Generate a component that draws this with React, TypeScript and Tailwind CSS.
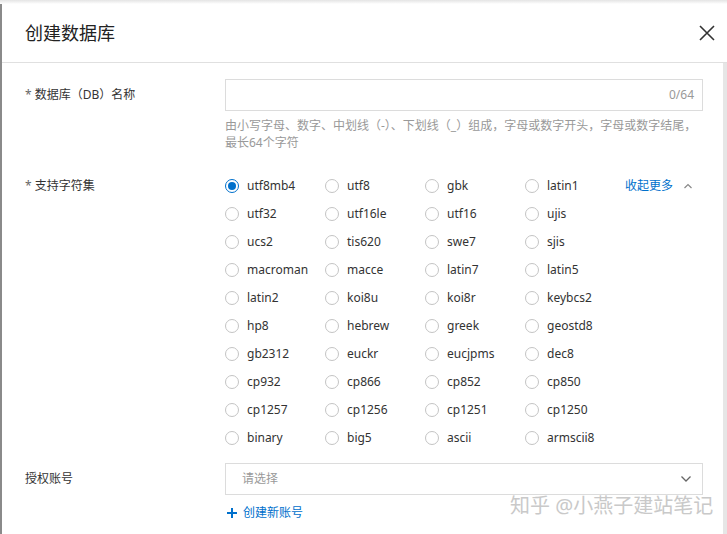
import React from "react";

const charsets = [
  "utf8mb4", "utf8", "gbk", "latin1",
  "utf32", "utf16le", "utf16", "ujis",
  "ucs2", "tis620", "swe7", "sjis",
  "macroman", "macce", "latin7", "latin5",
  "latin2", "koi8u", "koi8r", "keybcs2",
  "hp8", "hebrew", "greek", "geostd8",
  "gb2312", "euckr", "eucjpms", "dec8",
  "cp932", "cp866", "cp852", "cp850",
  "cp1257", "cp1256", "cp1251", "cp1250",
  "binary", "big5", "ascii", "armscii8",
];

function Radio({ checked }: { checked?: boolean }) {
  if (checked) {
    return (
      <span className="flex h-[14px] w-[14px] shrink-0 items-center justify-center rounded-full border border-[#0070cc] bg-white">
        <span className="h-[8px] w-[8px] rounded-full bg-[#0070cc]" />
      </span>
    );
  }
  return <span className="h-[14px] w-[14px] shrink-0 rounded-full border border-[#c4c4c4] bg-white" />;
}

export default function App() {
  return (
    <div
      className="relative h-[534px] w-[727px] overflow-hidden bg-white text-[#333]"
      style={{ fontFamily: '"Noto Sans", "Noto Sans CJK SC", sans-serif' }}
    >
      <div className="h-[4px] w-full bg-gradient-to-b from-[#e4e4e4] to-white" />
      <div className="flex h-[534px] border-l-2 border-[#8a8a8a]">
        <div className="flex flex-1 flex-col">
          {/* header */}
          <div className="flex h-[59px] items-center justify-between border-b border-[#e0e0e0] pl-[23px] pr-[10px]">
            <span className="text-[18px] leading-none text-[#222]">创建数据库</span>
            <svg width="18" height="18" viewBox="0 0 18 18" className="mr-[1px]">
              <path d="M2 2 L16 16 M16 2 L2 16" stroke="#333" strokeWidth="1.6" fill="none" />
            </svg>
          </div>
          <div className="flex flex-1">
            <div className="flex-1 pl-[23px] pr-[20px] pt-[16px]">
              {/* row 1 */}
              <div className="flex">
                <div className="flex h-[32px] w-[200px] shrink-0 items-center text-[12px]">
                  <span className="mr-[3px] text-[#666]">*</span>数据库（DB）名称
                </div>
                <div className="flex-1">
                  <div className="flex h-[32px] items-center justify-end border border-[#dcdcdc] pr-[8px] text-[12px] text-[#999]">
                    0/64
                  </div>
                  <div className="mt-[6px] text-[12px] leading-[17px] text-[#999]">
                    由小写字母、数字、中划线（-）、下划线（_）组成，字母或数字开头，字母或数字结尾，
                    <br />
                    最长64个字符
                  </div>
                </div>
              </div>
              {/* row 2 */}
              <div className="mt-[21px] flex">
                <div className="flex h-[28px] w-[200px] shrink-0 items-center text-[12px]">
                  <span className="mr-[3px] text-[#666]">*</span>支持字符集
                </div>
                <div className="relative flex-1">
                  <div className="grid grid-cols-[100px_100px_100px_100px]">
                    {charsets.map((c, i) => (
                      <div key={c} className="flex h-[28px] items-center gap-[8px] text-[12px] text-[#333]">
                        <Radio checked={i === 0} />
                        <span>{c}</span>
                      </div>
                    ))}
                  </div>
                  <div className="absolute left-[400px] top-0 flex h-[28px] items-center gap-[10px] text-[12px] text-[#0070cc]">
                    <span>收起更多</span>
                    <svg width="10" height="8" viewBox="0 0 10 8">
                      <path d="M1.5 6 L5 2.5 L8.5 6" stroke="#888" strokeWidth="1.2" fill="none" />
                    </svg>
                  </div>
                </div>
              </div>
              {/* row 3 */}
              <div className="mt-[11px] flex">
                <div className="flex h-[32px] w-[200px] shrink-0 items-center text-[12px]">授权账号</div>
                <div className="flex-1">
                  <div className="flex h-[32px] items-center justify-between border border-[#dcdcdc] pl-[16px] pr-[10px] text-[12px] text-[#999]">
                    <span>请选择</span>
                    <svg width="12" height="8" viewBox="0 0 12 8">
                      <path d="M1.5 1.5 L6 6 L10.5 1.5" stroke="#666" strokeWidth="1.3" fill="none" />
                    </svg>
                  </div>
                  <div className="mt-[9px] flex items-center gap-[5px] pl-[1px] text-[12px] text-[#0070cc]">
                    <svg width="12" height="12" viewBox="0 0 12 12">
                      <path d="M6 1 V11 M1 6 H11" stroke="#0070cc" strokeWidth="2" fill="none" />
                    </svg>
                    <span>创建新账号</span>
                  </div>
                </div>
              </div>
            </div>
            <div className="w-[4px] bg-[#e6e6e6]" />
          </div>
        </div>
      </div>
      <div
        className="absolute left-[510px] top-[496px] text-[20px] leading-none text-[#c9c9c9]"
        style={{ textShadow: "0 0 1px #fff" }}
      >
        知乎 @小燕子建站笔记
      </div>
    </div>
  );
}
